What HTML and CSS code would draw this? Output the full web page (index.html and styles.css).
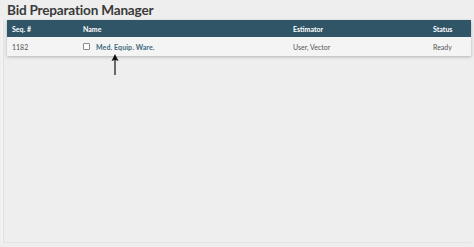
FILE: index.html
```html
<!DOCTYPE html>
<html>
<head>
<meta charset="utf-8">
<link rel="stylesheet" href="styles.css">
</head>
<body>
<div class="page">
  <h1 class="title">Bid Preparation Manager</h1>
  <div class="panel">
    <div class="card">
      <div class="row head">
        <div class="c seq">Seq. #</div>
        <div class="c name">Name</div>
        <div class="c est">Estimator</div>
        <div class="c status">Status</div>
      </div>
      <div class="row body">
        <div class="c seq">1182</div>
        <div class="c name"><span class="box"></span><span class="link">Med. Equip. Ware.</span></div>
        <div class="c est">User, Vector</div>
        <div class="c status">Ready</div>
      </div>
    </div>
    <svg class="arrow" width="8" height="21" viewBox="0 0 8 21">
      <path d="M4 0 L7.5 7 L4.6 6 L4.6 21 L3.4 21 L3.4 6 L0.5 7 Z" fill="#111"/>
    </svg>
  </div>
</div>
</body>
</html>
```
FILE: styles.css
```css
html, body {
  margin: 0;
  padding: 0;
  background: #eeeeee;
}
body {
  width: 474px;
  height: 247px;
  overflow: hidden;
  font-family: Lato, "Open Sans", sans-serif;
}
.page {
  padding: 0 3px 0 6px;
}
.title {
  margin: 0;
  padding: 2px 0 0 1px;
  height: 20px;
  box-sizing: border-box;
  font-size: 13.6px;
  font-weight: 700;
  color: #3a3a3a;
  line-height: 16px;
  letter-spacing: -0.2px;
}
.panel {
  position: relative;
  height: 222px;
  border-left: 1px solid #e0e0e0;
  border-bottom: 1px solid #e4e4e4;
  margin-left: -3px;
  padding-left: 3px;
  box-shadow: -2px 0 0 #f3f3f3;
}
.card {
  background: #f4f4f4;
  box-shadow: 0 1px 3px rgba(0,0,0,0.25);
}
.row {
  display: flex;
  align-items: center;
  font-size: 7px;
}
.head {
  height: 17px;
  background: #2f5566;
  color: #fff;
  font-weight: 700;
}
.body {
  height: 19px;
  color: #555;
}
.c { padding-left: 5px; box-sizing: border-box; }
.seq { width: 71px; }
.name { width: 210px; display: flex; align-items: center; }
.est { width: 140px; }
.status { flex: 1; }
.box {
  width: 5px;
  height: 5px;
  border: 1px solid #888;
  border-radius: 1px;
  background: #fff;
  margin-right: 6px;
}
.link {
  color: #3d6a7e;
  font-weight: 700;
  letter-spacing: 0.1px;
}
.arrow {
  position: absolute;
  left: 107px;
  top: 34px;
}
```
